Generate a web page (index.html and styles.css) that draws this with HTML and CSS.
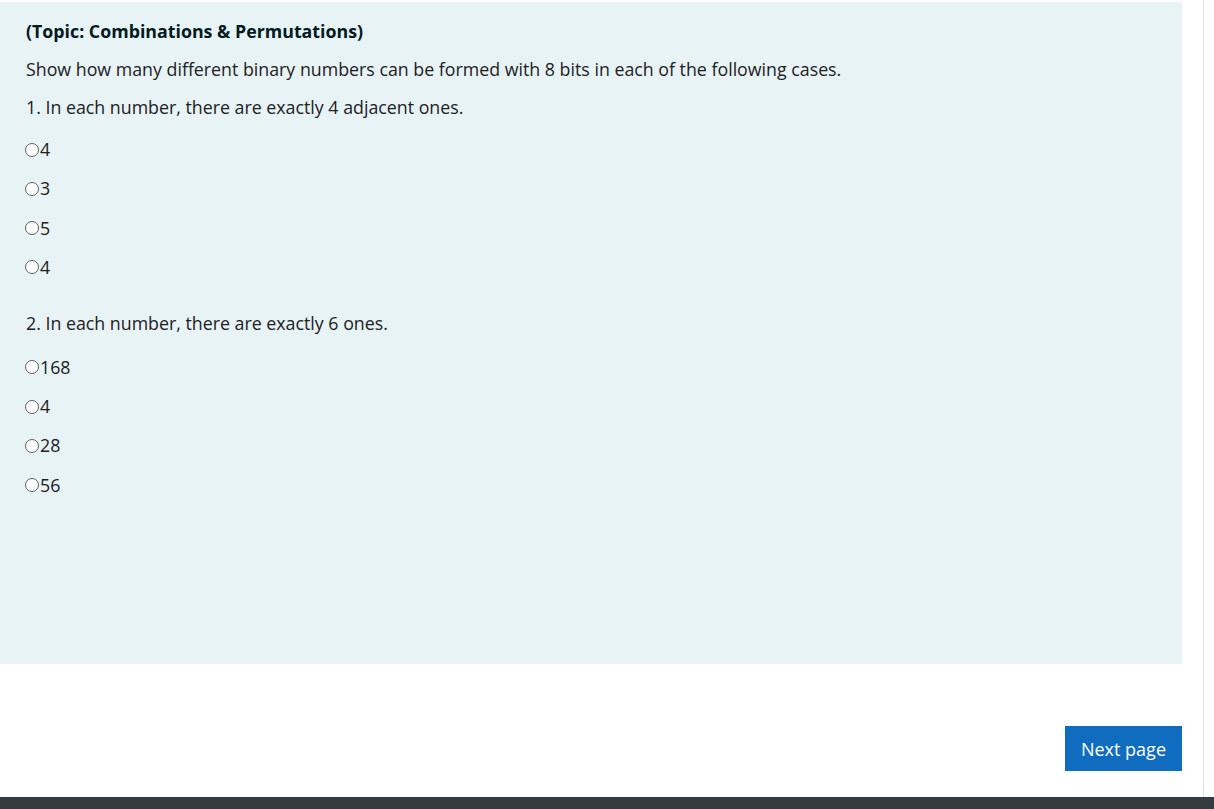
FILE: index.html
```html
<!DOCTYPE html>
<html lang="en">
<head>
    <meta charset="UTF-8">
    <title>Quiz attempt</title>
    <link rel="stylesheet" href="styles.css">
</head>
<body>

    <div class="page">
        <!-- Question panel -->
        <div class="question">
            <p class="topic">(Topic: Combinations &amp; Permutations)</p>
            <p>Show how many different binary numbers can be formed with 8 bits in each of the following cases.</p>
            <p class="prompt">1. In each number, there are exactly 4 adjacent ones.</p>

            <div class="answers">
                <label><input type="radio" name="q1">4</label>
                <label><input type="radio" name="q1">3</label>
                <label><input type="radio" name="q1">5</label>
                <label><input type="radio" name="q1">4</label>
            </div>

            <p class="prompt second">2. In each number, there are exactly 6 ones.</p>

            <div class="answers">
                <label><input type="radio" name="q2">168</label>
                <label><input type="radio" name="q2">4</label>
                <label><input type="radio" name="q2">28</label>
                <label><input type="radio" name="q2">56</label>
            </div>
        </div>

        <div class="nav">
            <button class="next-button">Next page</button>
        </div>
    </div>

    <div class="footer"></div>

</body>
</html>
```

FILE: styles.css
```css
body {
    font-family: "Open Sans", "Noto Sans", sans-serif;
    font-size: 17.8px;
    color: #1d2125;
    margin: 0;
    background-color: #ffffff;
}

.page {
    width: 1204px;
    height: 797px;
    border-right: 1px solid #dee2e6;
    box-sizing: border-box;
    padding-top: 2px;
}

.question {
    width: 1182px;
    height: 662px;
    box-sizing: border-box;
    background-color: #e7f3f5;
    padding: 16px 26px 0;
}

.question p {
    margin: 0 0 11px;
    line-height: 27px;
}

.question p.topic {
    font-weight: bold;
    color: #001a1e;
}

.question p.prompt {
    margin-bottom: 15px;
}

.question p.second {
    margin-top: 29px;
    margin-bottom: 17px;
}

.answers label {
    display: flex;
    align-items: center;
    height: 27px;
    margin-bottom: 12.3px;
    line-height: 27px;
}

/* plain round radio like the Windows default */
.answers input {
    appearance: none;
    flex: none;
    box-sizing: border-box;
    width: 14px;
    height: 14px;
    margin: 0 1px 0 -1px;
    border: 1px solid #5f5f5f;
    border-radius: 50%;
    background-color: #ffffff;
}

.nav {
    width: 1182px;
    display: flex;
    justify-content: flex-end;
    padding-top: 62px;
}

.next-button {
    font-family: inherit;
    font-size: 18px;
    color: #ffffff;
    background-color: #0f6cbf;
    border: none;
    height: 45px;
    padding: 0 16px;
}

.footer {
    height: 12px;
    background-color: #343a40;
}
```
